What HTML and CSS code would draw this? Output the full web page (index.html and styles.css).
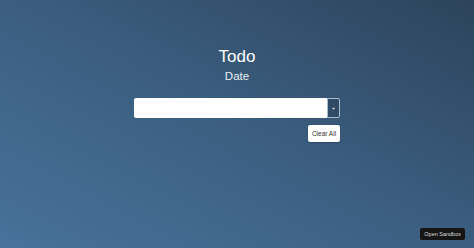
FILE: index.html
```html
<!DOCTYPE html>
<html lang="en">
<head>
    <meta charset="UTF-8">
    <meta name="viewport" content="width=device-width, initial-scale=1.0">
    <title>Todo</title>
    <link rel="stylesheet" href="styles.css">
</head>
<body>
    <div class="app">
        <h1 class="title">Todo</h1>
        <h2 class="date">Date</h2>
        <form class="add-form">
            <input type="text" class="todo-input">
            <button type="button" class="add-btn">+</button>
        </form>
        <div class="actions">
            <button type="button" class="clear-btn">Clear All</button>
        </div>
        <ul class="todo-list"></ul>
    </div>
    <a class="sandbox-btn">Open Sandbox</a>
</body>
</html>
```

FILE: styles.css
```css
html, body { height: 100%; }
body { margin: 0; font-family: "Liberation Sans", Arial, sans-serif; color: #fff; background: linear-gradient(to top right, #48729a 0%, #3b5e80 50%, #2d435c 100%); overflow: hidden; }
.app { width: 206px; margin: 0 auto; padding-top: 47px; display: flex; flex-direction: column; align-items: center; }
.title { margin: 0; font-size: 17px; font-weight: normal; line-height: 20px; }
.date { margin: 2px 0 0; font-size: 11.5px; font-weight: normal; line-height: 14px; color: #e8eef4; }
.add-form { width: 100%; display: flex; margin-top: 15px; height: 20px; }
.todo-input { flex: 1; margin: 0; padding: 0 6px; border: none; border-radius: 2px 0 0 2px; background: #fff; height: 20px; box-sizing: border-box; }
.add-btn { width: 13px; height: 20px; padding: 0; margin: 0; box-sizing: border-box; background: #2f4b68; border: 1px solid #a9bccc; border-radius: 0 2px 2px 0; color: #fff; font-size: 5px; line-height: 1; cursor: pointer; }
.actions { width: 100%; display: flex; justify-content: flex-end; margin-top: 7px; }
.clear-btn { background: #fff; border: none; border-radius: 2px; height: 17px; width: 32px; padding: 0; font-family: "Liberation Sans", Arial, sans-serif; font-size: 6.5px; color: #333; cursor: pointer; box-shadow: 0 1px 2px rgba(0,0,0,0.2); }
.todo-list { margin: 0; padding: 0; list-style: none; }
.sandbox-btn { position: fixed; right: 9px; bottom: 8px; background: #151515; color: #ddd; font-size: 5.5px; padding: 0 4px; height: 12px; line-height: 12px; border-radius: 2px; }
```
